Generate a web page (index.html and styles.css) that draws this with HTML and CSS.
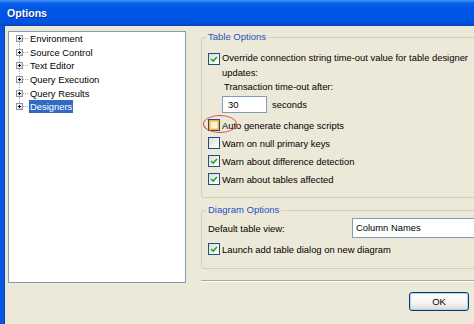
FILE: index.html
```html
<!DOCTYPE html>
<html lang="en">

<head>
  <meta charset="UTF-8">
  <title>Options</title>
  <link rel="stylesheet" href="styles.css">
</head>

<body>
  <div class="window">
    <div class="titlebar"><span class="title">Options</span></div>

    <div class="frame">
      <div class="client">

        <!-- options tree -->
        <ul class="tree">
          <li><span class="plus"></span><span class="stub"></span><span class="node">Environment</span></li>
          <li><span class="plus"></span><span class="stub"></span><span class="node">Source Control</span></li>
          <li><span class="plus"></span><span class="stub"></span><span class="node">Text Editor</span></li>
          <li><span class="plus"></span><span class="stub"></span><span class="node">Query Execution</span></li>
          <li><span class="plus"></span><span class="stub"></span><span class="node">Query Results</span></li>
          <li class="selected"><span class="plus"></span><span class="stub"></span><span class="node">Designers</span></li>
        </ul>

        <div class="pane">
          <fieldset class="group group-table">
            <legend>Table Options</legend>

            <div class="check check-wrap">
              <span class="box checked"><svg viewBox="0 0 12 12"><polyline points="2.5,6 5,8.5 9.5,3.5" /></svg></span>
              <span>Override connection string time-out value for table designer<br>updates:</span>
            </div>

            <div class="timeout-label">Transaction time-out after:</div>
            <div class="timeout-row">
              <span class="textbox">30</span>
              <span class="unit">seconds</span>
            </div>

            <div class="check first">
              <span class="box hot"></span><span>Auto generate change scripts</span>
              <span class="circle"></span>
            </div>
            <div class="check">
              <span class="box"></span><span>Warn on null primary keys</span>
            </div>
            <div class="check">
              <span class="box checked"><svg viewBox="0 0 12 12"><polyline points="2.5,6 5,8.5 9.5,3.5" /></svg></span>
              <span>Warn about difference detection</span>
            </div>
            <div class="check">
              <span class="box checked"><svg viewBox="0 0 12 12"><polyline points="2.5,6 5,8.5 9.5,3.5" /></svg></span>
              <span>Warn about tables affected</span>
            </div>
          </fieldset>

          <fieldset class="group group-diagram">
            <legend>Diagram Options</legend>
            <div class="view-row">
              <span class="view-label">Default table view:</span>
              <span class="combo">Column Names</span>
            </div>
            <div class="check">
              <span class="box checked"><svg viewBox="0 0 12 12"><polyline points="2.5,6 5,8.5 9.5,3.5" /></svg></span>
              <span>Launch add table dialog on new diagram</span>
            </div>
          </fieldset>

          <div class="separator"></div>

          <div class="buttons">
            <button class="btn">OK</button>
          </div>
        </div>

      </div>
    </div>
  </div>
</body>

</html>
```

FILE: styles.css
```css
  /* XP style options dialog */
  body {
    margin: 0;
    padding: 0;
    width: 474px;
    height: 324px;
    overflow: hidden;
    font-family: "Liberation Sans", Arial, sans-serif;
    font-size: 9.4px;
    color: #000;
    background: #ECE9D8;
  }

  .titlebar {
    height: 26px;
    display: flex;
    align-items: center;
    padding-left: 7px;
    background: linear-gradient(#4A95F8 0, #0A62EC 3px, #0058E6 7px, #0055E4 19px, #0050DA 24px, #0A3FB0 26px);
  }

  .title {
    color: #fff;
    font-weight: bold;
    font-size: 10.6px;
    text-shadow: 1px 1px 0 #0A2C8A;
  }

  .frame {
    height: 298px;
    border-left: 4px solid #0756E2;
    box-shadow: inset 1px 0 0 #0A3FB0;
    background: #ECE9D8;
  }

  .client {
    display: flex;
    padding: 5px 0 0 4px;
  }

  /* tree */
  .tree {
    list-style: none;
    margin: 0;
    padding: 0 0 0 7px;
    width: 178px;
    height: 252px;
    box-sizing: border-box;
    border: 1px solid #7F9DB9;
    background: #fff;
  }

  .tree li {
    position: relative;
    height: 13.6px;
    display: flex;
    align-items: center;
  }

  /* dotted line down to the next node */
  .tree li:not(:last-child)::after {
    content: "";
    position: absolute;
    left: 3px;
    top: 10.3px;
    height: 6.6px;
    border-left: 1px dotted #A8A8A8;
  }

  .plus {
    position: relative;
    width: 7px;
    height: 7px;
    box-sizing: border-box;
    border: 1px solid #8C98A8;
    background: linear-gradient(135deg, #fff, #D8D8D0);
  }

  .plus::before {
    content: "";
    position: absolute;
    left: 1px;
    top: 2px;
    width: 3px;
    height: 1px;
    background: #000;
  }

  .plus::after {
    content: "";
    position: absolute;
    left: 2px;
    top: 1px;
    width: 1px;
    height: 3px;
    background: #000;
  }

  .stub {
    width: 5px;
    margin-right: 1px;
    border-top: 1px dotted #A8A8A8;
  }

  .node {
    padding: 0 1px;
    line-height: 13px;
  }

  .tree .selected .node {
    background: #316AC5;
    color: #fff;
  }

  /* right pane, the dialog is cut off on the right */
  .pane {
    margin-left: 15px;
    width: 273px;
    display: flex;
    flex-direction: column;
    overflow: hidden;
  }

  .group {
    margin: 0;
    padding: 0 0 9px 6px;
    width: 300px;
    min-width: 0;
    box-sizing: border-box;
    border: 1px solid #D0D0BF;
    border-radius: 3px;
  }

  .group legend {
    color: #1F4FC0;
    padding: 0 2px;
    margin-left: -2px;
    font-size: 9.5px;
    line-height: 12px;
  }

  .group-diagram {
    margin-top: 6px;
    padding-bottom: 10px;
  }

  .check {
    position: relative;
    display: flex;
    align-items: center;
    height: 18px;
  }

  .check.first {
    margin-top: 3px;
  }

  .check-wrap {
    height: auto;
    align-items: flex-start;
    line-height: 14.5px;
    margin-top: 8px;
  }

  .check-wrap .box {
    margin-top: 1.5px;
  }

  .box {
    flex: none;
    width: 12px;
    height: 12px;
    box-sizing: border-box;
    border: 1px solid #1C5180;
    background: linear-gradient(135deg, #DCDCD4, #F6F6F3 70%, #fff);
    margin-right: 2px;
  }

  .box svg {
    display: block;
    width: 10px;
    height: 10px;
  }

  .box polyline {
    fill: none;
    stroke: #21A121;
    stroke-width: 1.8;
  }

  .box.hot {
    background: linear-gradient(135deg, #FCE3A8, #FFF6E0 70%, #fff);
    box-shadow: inset 0 0 0 1.5px #F8B53C;
  }

  .circle {
    position: absolute;
    left: -5px;
    top: -1px;
    width: 34px;
    height: 18px;
    box-sizing: border-box;
    border: 1px solid #D04848;
    border-radius: 50%;
  }

  .timeout-label {
    margin-left: 16px;
    line-height: 14px;
  }

  .timeout-row {
    display: flex;
    align-items: center;
    margin-top: 2px;
    margin-left: 14px;
  }

  .textbox {
    width: 45px;
    height: 17px;
    box-sizing: border-box;
    border: 1px solid #7F9DB9;
    background: #fff;
    padding-left: 5px;
    line-height: 15px;
  }

  .unit {
    margin-left: 5px;
  }

  .view-row {
    display: flex;
    align-items: center;
    height: 20px;
    margin-top: 2px;
  }

  .view-label {
    width: 144px;
  }

  .combo {
    width: 140px;
    height: 20px;
    box-sizing: border-box;
    border: 1px solid #7F9DB9;
    background: #fff;
    padding-left: 3px;
    line-height: 18px;
  }

  .view-row + .check {
    margin-top: 2px;
  }

  .separator {
    margin-top: 11px;
    width: 300px;
    flex: none;
    border-top: 1px solid #ACA899;
    border-bottom: 1px solid #fff;
  }

  .buttons {
    display: flex;
    justify-content: flex-end;
    margin-top: 10px;
    padding-right: 5px;
  }

  .btn {
    width: 60px;
    height: 19px;
    padding: 0;
    font-family: inherit;
    font-size: 9.5px;
    color: #000;
    border: 1px solid #003C74;
    border-radius: 3px;
    background: linear-gradient(#FFFFFF, #F4F4F0 60%, #E2DFD6 90%, #D6D0C5);
    box-shadow: inset 0 0 0 1px #B8D0F2;
  }
```
